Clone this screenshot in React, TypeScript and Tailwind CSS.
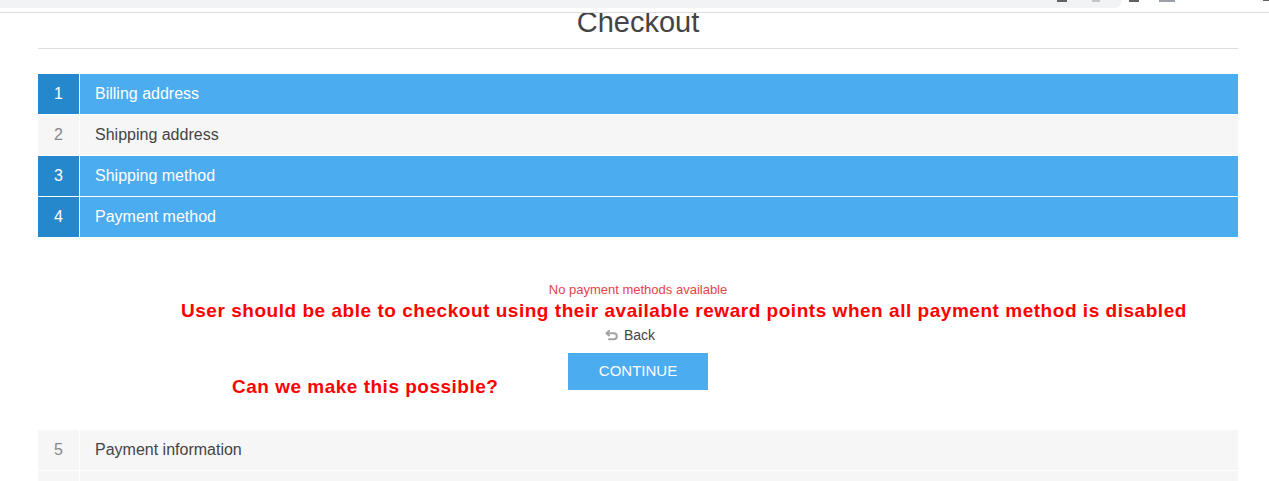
import React from "react";

type Step = { n: number; title: string; allow: boolean };

const steps: Step[] = [
  { n: 1, title: "Billing address", allow: true },
  { n: 2, title: "Shipping address", allow: false },
  { n: 3, title: "Shipping method", allow: true },
  { n: 4, title: "Payment method", allow: true },
];

function StepTitle({ step }: { step: Step }) {
  return (
    <div
      className={
        step.allow
          ? "flex h-[40px] bg-[#4bacef] text-white"
          : "flex h-[40px] bg-[#f6f6f6] text-[#444]"
      }
    >
      <div
        className={
          step.allow
            ? "flex w-[42px] shrink-0 items-center justify-center border-r border-white bg-[#2588cd] text-white"
            : "flex w-[42px] shrink-0 items-center justify-center border-r border-white text-[#888]"
        }
      >
        {step.n}
      </div>
      <div className="flex items-center pl-[15px]">{step.title}</div>
    </div>
  );
}

function BrowserStrip() {
  return (
    <div className="relative z-10 h-[13px] border-b border-[#dadce0] bg-white">
      <div className="flex h-[8px] items-start">
        <div className="h-[8px] w-[1123px] rounded-br-[8px] bg-[#f1f3f4]" />
        <div className="ml-[7px] h-[2px] w-[10px] bg-[#5f6368]" />
        <div className="ml-[20px] h-[2px] w-[16px] bg-[#9aa0a6]" />
        <div className="ml-[88px] h-[1px] w-[6px] bg-[#5f6368]" />
      </div>
      <div className="absolute left-[1057px] top-0 h-[2px] w-[10px] bg-[#5f6368]" />
      <div className="absolute left-[1092px] top-0 h-[2px] w-[8px] bg-[#c4c7c5]" />
    </div>
  );
}

export default function App() {
  return (
    <div
      className="h-[481px] overflow-hidden bg-white text-[16px] text-[#444]"
      style={{ fontFamily: '"Liberation Sans", Arial, sans-serif' }}
    >
      <BrowserStrip />
      <div className="ml-[38px] w-[1200px]">
        <div className="h-[20px] text-center text-[29px] leading-[19px] text-[#444]">
          Checkout
        </div>
        <div className="mt-[15px] border-b border-[#ddd]" />

        <div className="mt-[25px] flex flex-col gap-[1px]">
          {steps.map((s) => (
            <StepTitle key={s.n} step={s} />
          ))}
        </div>

        <div className="relative flex flex-col items-center pt-[45px] pb-[40px]">
          <div className="text-[13px] leading-[15px] text-[#e4434b]">
            No payment methods available
          </div>
          <div className="ml-[-16px] mt-[30px] flex items-center gap-[6px] text-[14px] leading-[16px] text-[#444]">
            <svg
              width="13"
              height="11"
              viewBox="0 0 13 11"
              fill="none"
              stroke="#a3a3a3"
              strokeWidth="2"
              strokeLinecap="round"
              strokeLinejoin="round"
            >
              <path d="M4 1 1.5 3.2 4 5.4" />
              <path d="M1.8 3.2h7a3 3 0 0 1 0 6H4" />
            </svg>
            <span>Back</span>
          </div>
          <button className="mt-[10px] h-[37px] w-[140px] bg-[#4bacef] text-[15px] uppercase text-white">
            Continue
          </button>

          <div className="absolute left-[143px] top-[63px] whitespace-nowrap text-[19px] font-bold leading-[22px] tracking-[0.53px] text-[#ff0000]">
            User should be able to checkout using their available reward points when all payment method is disabled
          </div>
          <div className="absolute left-[194px] top-[139px] whitespace-nowrap text-[19px] font-bold leading-[22px] tracking-[0.5px] text-[#ff0000]">
            Can we make this possible?
          </div>
        </div>

        <div className="flex flex-col gap-[1px]">
          <StepTitle step={{ n: 5, title: "Payment information", allow: false }} />
          <div className="flex h-[10px] bg-[#f6f6f6]">
            <div className="w-[42px] shrink-0 border-r border-white" />
          </div>
        </div>
      </div>
    </div>
  );
}
